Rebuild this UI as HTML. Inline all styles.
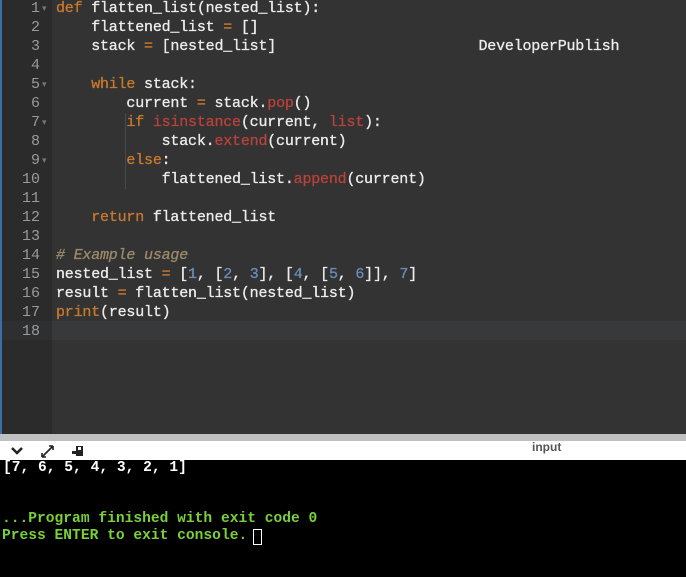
<!DOCTYPE html>
<html><head><meta charset="utf-8"><style>
html,body{margin:0;padding:0;width:686px;height:577px;overflow:hidden;background:#333}
.ed{position:absolute;left:0;top:0;width:686px;height:434px;background:#333333}
.gut{position:absolute;left:0;top:0;width:52px;height:434px;background:#2b2b2b;border-left:2px solid #3b6ea5;box-sizing:border-box}
.act{position:absolute;left:0;top:321px;width:686px;height:19px;background:#38393b}
.actg{position:absolute;left:0;top:321px;width:52px;height:19px;background:#2e2f30;border-left:2px solid #3b6ea5;box-sizing:border-box}
.ln{position:absolute;left:0;width:40px;text-align:right;color:#9a9a9a;font:15px/19px "Liberation Mono",monospace}
.fold{position:absolute;left:42px;color:#777;font:9px/19px sans-serif}
.code{position:absolute;left:56px;top:-1px;color:#ececec;font:15px/19px "Liberation Mono",monospace;white-space:pre;letter-spacing:-0.2px;-webkit-text-stroke:0.3px #ececec}
.k{color:#c8792e;-webkit-text-stroke-color:#c8792e}.b{color:#b9423a;-webkit-text-stroke-color:#b9423a}.n{color:#6a8bb5;-webkit-text-stroke-color:#6a8bb5}.c{color:#9a8a6a;font-style:italic;-webkit-text-stroke-color:#9a8a6a}.o{color:#c8792e;-webkit-text-stroke-color:#c8792e}
.guide{position:absolute;width:1px;background:#4a4a4a}
.bar{position:absolute;left:0;top:434px;width:686px;height:7px;background:#c0c0c0}
.tb{position:absolute;left:0;top:441px;width:686px;height:19px;background:#fff}
.inp{position:absolute;left:532px;top:440px;color:#555;font:bold 12px "Liberation Sans",sans-serif}
.con{position:absolute;left:0;top:460px;width:686px;height:117px;background:#000;font:bold 14.6px/17px "Liberation Mono",monospace;white-space:pre}
</style></head><body>
<div class="ed"></div><div class="gut"></div><div class="act"></div><div class="actg"></div>
<div class="guide" style="left:125px;top:113px;height:76px"></div>
<div class="ln" style="top:-1px">1</div><div class="ln" style="top:18px">2</div><div class="ln" style="top:37px">3</div><div class="ln" style="top:56px">4</div><div class="ln" style="top:75px">5</div><div class="ln" style="top:94px">6</div><div class="ln" style="top:113px">7</div><div class="ln" style="top:132px">8</div><div class="ln" style="top:151px">9</div><div class="ln" style="top:170px">10</div><div class="ln" style="top:189px">11</div><div class="ln" style="top:208px">12</div><div class="ln" style="top:227px">13</div><div class="ln" style="top:246px">14</div><div class="ln" style="top:265px">15</div><div class="ln" style="top:284px">16</div><div class="ln" style="top:303px">17</div><div class="ln" style="top:322px">18</div>
<div class="fold" style="top:-1px">▾</div><div class="fold" style="top:75px">▾</div><div class="fold" style="top:113px">▾</div><div class="fold" style="top:151px">▾</div>
<div class="code"><span class="k">def</span> flatten_list(nested_list):
    flattened_list <span class="o">=</span> []
    stack <span class="o">=</span> [nested_list]                       DeveloperPublish

    <span class="k">while</span> stack:
        current <span class="o">=</span> stack.<span class="b">pop</span>()
        <span class="k">if</span> <span class="b">isinstance</span>(current, <span class="b">list</span>):
            stack.<span class="b">extend</span>(current)
        <span class="k">else</span>:
            flattened_list.<span class="b">append</span>(current)

    <span class="k">return</span> flattened_list

<span class="c"># Example usage</span>
nested_list <span class="o">=</span> [<span class="n">1</span>, [<span class="n">2</span>, <span class="n">3</span>], [<span class="n">4</span>, [<span class="n">5</span>, <span class="n">6</span>]], <span class="n">7</span>]
result <span class="o">=</span> flatten_list(nested_list)
<span class="k">print</span>(result)
</div>
<div class="bar"></div><div class="tb">
<svg width="100" height="19" style="position:absolute;left:0;top:0">
<path d="M12 7 L17 12 L22 7" stroke="#222" stroke-width="2.5" fill="none"/>
<path d="M42 16 L53 5 M42 16 l0 -4 M42 16 l4 0 M53 5 l-4 0 M53 5 l0 4" stroke="#222" stroke-width="1.6" fill="none"/>
<rect x="76" y="5" width="7" height="10" fill="#222"/><rect x="72" y="10" width="5" height="3" fill="#222"/><rect x="78" y="6" width="3" height="3" fill="#fff"/>
</svg></div>
<div class="inp">input</div>
<div class="con"><span style="color:#fff;position:absolute;left:3px;top:0">[7, 6, 5, 4, 3, 2, 1]</span><span style="color:#7ad03a;position:absolute;left:2px;top:51px">...Program finished with exit code 0</span><span style="color:#7ad03a;position:absolute;left:2px;top:68px">Press ENTER to exit console.</span><span style="position:absolute;left:253px;top:69px;width:9px;height:16px;border:1px solid #fff;box-sizing:border-box"></span></div>
</body></html>
